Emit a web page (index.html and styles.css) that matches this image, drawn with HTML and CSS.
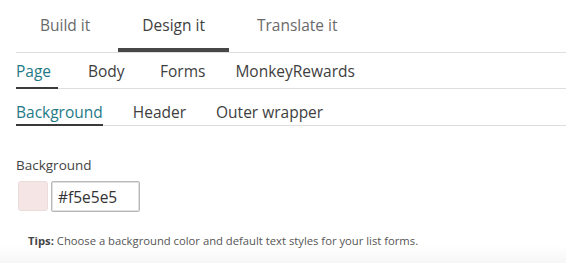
FILE: index.html
```html
<!DOCTYPE html>
<html lang="en">
<head>
<meta charset="utf-8">
<title>Design it</title>
<link rel="stylesheet" href="styles.css">
</head>
<body>
<div class="page">
  <nav class="tabs-main">
    <a class="main-tab">Build it</a>
    <a class="main-tab active">Design it</a>
    <a class="main-tab">Translate it</a>
  </nav>
  <nav class="tabs-sub tabs-sub-1">
    <a class="sub-tab active">Page</a>
    <a class="sub-tab">Body</a>
    <a class="sub-tab">Forms</a>
    <a class="sub-tab">MonkeyRewards</a>
  </nav>
  <nav class="tabs-sub tabs-sub-2">
    <a class="sub-tab active">Background</a>
    <a class="sub-tab">Header</a>
    <a class="sub-tab">Outer wrapper</a>
  </nav>
  <section class="field">
    <label class="field-label">Background</label>
    <div class="color-row">
      <span class="swatch"></span>
      <input class="color-input" type="text" value="#f5e5e5">
    </div>
  </section>
  <p class="tips"><strong>Tips:</strong> Choose a background color and default text styles for your list forms.</p>
</div>
</body>
</html>
```
FILE: styles.css
```css
html, body {
  margin: 0;
  padding: 0;
}
body {
  font-family: "Open Sans", "Liberation Sans", sans-serif;
  min-height: 263px;
  background: linear-gradient(to bottom, #ffffff 0, #ffffff 246px, #f6f6f6 263px);
}
.page {
  padding-left: 16px;
}
.tabs-main {
  display: flex;
  gap: 4px;
  border-bottom: 1px solid #dedede;
}
.main-tab {
  display: block;
  font-size: 15.5px;
  line-height: 20px;
  padding: 15px 24px 13px;
  border-bottom: 4px solid transparent;
  color: #6a6a6a;
}
.main-tab.active {
  color: #3e3e3e;
  border-bottom-color: #474747;
}
.tabs-sub {
  display: flex;
  border-bottom: 1px solid #dedede;
}
.sub-tab {
  display: block;
  font-size: 15.5px;
  line-height: 20px;
  min-width: 42px;
  margin-right: 30px;
  margin-bottom: -1px;
  border-bottom: 2px solid transparent;
  color: #3e3e3e;
}
.tabs-sub-1 .sub-tab {
  padding: 8px 0 6px;
}
.tabs-sub-2 .sub-tab {
  padding: 13px 0 2px;
}
.sub-tab.active {
  color: #1f7a88;
  border-bottom-color: #3a3a3a;
}
.field {
  margin-top: 30px;
}
.field-label {
  display: block;
  font-size: 13.5px;
  line-height: 18px;
  color: #444;
}
.color-row {
  display: flex;
  gap: 3px;
  margin-top: 7px;
}
.swatch {
  display: block;
  width: 30px;
  height: 30px;
  margin-left: 2px;
  box-sizing: border-box;
  background: #f5e5e5;
  border: 1px solid #ebdcdc;
  border-radius: 3px;
}
.color-input {
  box-sizing: border-box;
  width: 89px;
  height: 31px;
  margin: 0;
  padding: 0 6px;
  font-family: "Open Sans", "Liberation Sans", sans-serif;
  font-size: 15.5px;
  color: #333;
  border: 1px solid #b8b8b8;
  box-shadow: inset 0 0 0 1px #e0e0e0;
  border-radius: 2px;
  outline: none;
  background: #fff;
}
.tips {
  margin: 21px 0 0 12px;
  font-size: 11.25px;
  line-height: 16px;
  color: #555;
}
.tips strong {
  font-weight: 700;
  color: #444;
}
```
